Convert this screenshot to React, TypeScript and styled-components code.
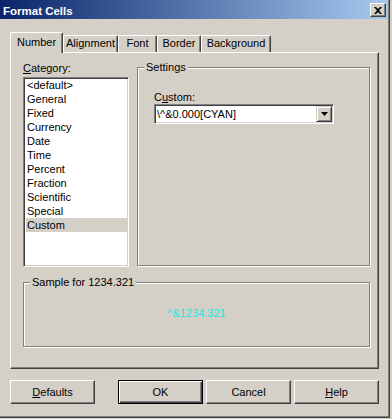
import React from "react";
import styled, { createGlobalStyle } from "styled-components";

const GlobalStyle = createGlobalStyle`
  html, body { margin: 0; padding: 0; background: #d4d0c8; }
  body {
    font-family: "Liberation Sans", Arial, sans-serif;
    font-size: 11px;
    color: #000;
  }
  * { box-sizing: border-box; }
`;

const Window = styled.div`
  width: 390px;
  height: 418px;
  display: flex;
  flex-direction: column;
  padding: 0 2px 2px 0;
  background: #d4d0c8;
  box-shadow: inset -1px -1px 0 #404040, inset -2px -2px 0 #808080;
`;

const TitleBar = styled.div`
  height: 19px;
  flex: none;
  display: flex;
  align-items: center;
  padding: 0 2px 0 3px;
  background: linear-gradient(to right, #0a246a, #a6caf0);
`;

const Title = styled.span`
  flex: 1;
  color: #fff;
  font-weight: bold;
  font-size: 11.5px;
  line-height: 13px;
  padding-top: 3px;
`;

const CloseButton = styled.div`
  width: 16px;
  height: 14px;
  margin-top: 1px;
  display: flex;
  align-items: center;
  justify-content: center;
  background: #d4d0c8;
  border: 1px solid;
  border-color: #fff #404040 #404040 #fff;
  box-shadow: inset -1px -1px 0 #808080;
`;

const Body = styled.div`
  flex: 1;
  display: flex;
  flex-direction: column;
  padding: 13px 9px 0 10px;
`;

const TabStrip = styled.div`
  display: flex;
  align-items: flex-end;
  height: 20px;
  position: relative;
  z-index: 1;
`;

const Tab = styled.div<{ $w: number; $active?: boolean }>`
  width: ${(p) => p.$w}px;
  height: ${(p) => (p.$active ? 21 : 17)}px;
  margin-bottom: ${(p) => (p.$active ? -1 : 0)}px;
  padding-top: ${(p) => (p.$active ? 3 : 1)}px;
  line-height: 13px;
  text-align: center;
  white-space: nowrap;
  background: #d4d0c8;
  border-top: 1px solid #fff;
  border-left: 1px solid #fff;
  border-right: 1px solid #404040;
  border-radius: 2px 2px 0 0;
  box-shadow: inset -1px 0 0 #808080;
`;

const Panel = styled.div`
  display: flex;
  flex-direction: column;
  padding: 8px 8px 21px 12px;
  border: 1px solid;
  border-color: #fff #404040 #404040 #fff;
  box-shadow: inset -1px -1px 0 #808080;
`;

const TopRow = styled.div`
  display: flex;
  align-items: flex-start;
  gap: 8px;
`;

const CategoryColumn = styled.div`
  width: 106px;
  flex: none;
  display: flex;
  flex-direction: column;
  padding-top: 1px;
`;

const FieldLabel = styled.div`
  line-height: 13px;
  white-space: nowrap;
`;

const ListBox = styled.ul`
  list-style: none;
  margin: 2px 0 0 0;
  padding: 0 0 0 2px;
  height: 190px;
  background: #fff;
  border: 1px solid;
  border-color: #808080 #fff #fff #808080;
  box-shadow: inset 1px 1px 0 #404040, inset -1px -1px 0 #d4d0c8;
`;

const ListItem = styled.li<{ $selected?: boolean }>`
  height: 14px;
  line-height: 13px;
  padding: 1px 0 0 1px;
  white-space: nowrap;
  background: ${(p) => (p.$selected ? "#d4d0c8" : "transparent")};
`;

const GroupBox = styled.fieldset<{ $h: number }>`
  margin: 0;
  padding: 0;
  min-width: 0;
  height: ${(p) => p.$h}px;
  border: 1px solid #808080;
  box-shadow: 1px 1px 0 #fff, inset 1px 1px 0 #fff;
`;

const SettingsBox = styled(GroupBox)`
  flex: 1;
`;

const SampleBox = styled(GroupBox)`
  margin-top: 9px;
`;

const Legend = styled.legend`
  margin-left: 6px;
  padding: 0 2px;
  line-height: 13px;
  background: #d4d0c8;
`;

const SettingsContent = styled.div`
  padding: 17px 0 0 16px;
`;

const Combo = styled.div`
  width: 180px;
  height: 20px;
  display: flex;
  background: #fff;
  border: 1px solid;
  border-color: #808080 #fff #fff #808080;
  box-shadow: inset 1px 1px 0 #404040, inset -1px -1px 0 #d4d0c8;
  padding: 1px;
`;

const ComboText = styled.div`
  flex: 1;
  line-height: 16px;
  padding-left: 1px;
  white-space: nowrap;
  overflow: hidden;
`;

const DropButton = styled.div`
  width: 16px;
  height: 16px;
  flex: none;
  display: flex;
  align-items: center;
  justify-content: center;
  background: #d4d0c8;
  border: 1px solid;
  border-color: #d4d0c8 #404040 #404040 #d4d0c8;
  box-shadow: inset 1px 1px 0 #fff, inset -1px -1px 0 #808080;
`;

const SampleText = styled.div`
  padding-top: 18px;
  line-height: 13px;
  text-align: center;
  color: #19e6e0;
`;

const ButtonBar = styled.div`
  display: flex;
  gap: 3px;
  margin-top: 11px;
`;

const Button = styled.button<{ $default?: boolean; $gapAfter?: number }>`
  width: 85px;
  height: 24px;
  margin: 0 ${(p) => p.$gapAfter ?? 0}px 0 0;
  padding: 0;
  font: inherit;
  color: #000;
  background: #d4d0c8;
  border: 1px solid;
  border-color: ${(p) =>
    p.$default ? "#000" : "#fff #404040 #404040 #fff"};
  box-shadow: ${(p) =>
    p.$default
      ? "inset 1px 1px 0 #fff, inset -1px -1px 0 #404040, inset -2px -2px 0 #808080"
      : "inset -1px -1px 0 #808080"};
`;

const categories = [
  "<default>",
  "General",
  "Fixed",
  "Currency",
  "Date",
  "Time",
  "Percent",
  "Fraction",
  "Scientific",
  "Special",
  "Custom",
];

const tabs: { label: string; w: number }[] = [
  { label: "Number", w: 53 },
  { label: "Alignment", w: 55 },
  { label: "Font", w: 39 },
  { label: "Border", w: 44 },
  { label: "Background", w: 70 },
];

export default function App() {
  return (
    <>
      <GlobalStyle />
      <Window>
        <TitleBar>
          <Title>Format Cells</Title>
          <CloseButton>
            <svg width="8" height="7" viewBox="0 0 8 7">
              <path
                d="M0 0h2l2 2 2-2h2L5 3.5 8 7H6L4 5 2 7H0l3-3.5z"
                fill="#000"
              />
            </svg>
          </CloseButton>
        </TitleBar>
        <Body>
          <TabStrip>
            {tabs.map((t, i) => (
              <Tab key={t.label} $w={t.w} $active={i === 0}>
                {t.label}
              </Tab>
            ))}
          </TabStrip>
          <Panel>
            <TopRow>
              <CategoryColumn>
                <FieldLabel>
                  <u>C</u>ategory:
                </FieldLabel>
                <ListBox>
                  {categories.map((c) => (
                    <ListItem key={c} $selected={c === "Custom"}>
                      {c}
                    </ListItem>
                  ))}
                </ListBox>
              </CategoryColumn>
              <SettingsBox $h={205}>
                <Legend>Settings</Legend>
                <SettingsContent>
                  <FieldLabel>
                    C<u>u</u>stom:
                  </FieldLabel>
                  <Combo>
                    <ComboText>\^&amp;0.000[CYAN]</ComboText>
                    <DropButton>
                      <svg width="7" height="4" viewBox="0 0 7 4">
                        <path d="M0 0h7L3.5 4z" fill="#000" />
                      </svg>
                    </DropButton>
                  </Combo>
                </SettingsContent>
              </SettingsBox>
            </TopRow>
            <SampleBox $h={71}>
              <Legend>Sample for 1234.321</Legend>
              <SampleText>^&amp;1234.321</SampleText>
            </SampleBox>
          </Panel>
          <ButtonBar>
            <Button $gapAfter={20}>
              <u>D</u>efaults
            </Button>
            <Button $default>OK</Button>
            <Button>Cancel</Button>
            <Button>
              <u>H</u>elp
            </Button>
          </ButtonBar>
        </Body>
      </Window>
    </>
  );
}
